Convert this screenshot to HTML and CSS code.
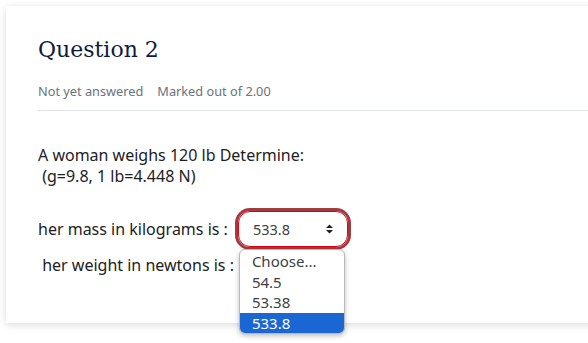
FILE: index.html
```html
<!DOCTYPE html>
<html>

<head>
  <meta charset="UTF-8">
  <meta name="viewport" content="width=device-width, initial-scale=1">
  <title>Question 2</title>

  <link rel="stylesheet" href="styles.css">
</head>

<body>

  <div class="que">
    <h3 class="que-title">Question 2</h3>
    <div class="que-info">
      <span>Not yet answered</span>
      <span>Marked out of 2.00</span>
    </div>
    <div class="que-text">
      <p>A woman weighs 120 lb Determine:<br>&nbsp;(g=9.8, 1 lb=4.448 N)</p>
    </div>

    <div class="answer-row">
      <span class="answer-label">her mass in kilograms is :</span>
      <div class="select-wrap">
        <div class="select is-invalid">
          <span class="select-value">533.8</span>
          <svg class="select-arrow" width="9" height="12" viewBox="0 0 9 12">
            <path d="M4.5 1.5 L8 5 H1 Z M4.5 10.5 L8 7 H1 Z" fill="#1d2125"/>
          </svg>
        </div>
        <ul class="select-popup">
          <li>Choose...</li>
          <li>54.5</li>
          <li>53.38</li>
          <li class="selected">533.8</li>
        </ul>
      </div>
    </div>

    <div class="answer-row second">
      <span class="answer-label">&nbsp;her weight in newtons is :</span>
      <div class="select hidden-under"></div>
    </div>
  </div>

</body>

</html>
```

FILE: styles.css
```css
html,
body {
  height: 100%;
  overflow: hidden;
}

body {
  margin: 0;
  background: #fff;
  font-family: "Noto Sans", "Open Sans", sans-serif;
  color: #1d2125;
}

.que {
  margin: 6px 0 0 6px;
  width: 600px;
  height: 317px;
  padding: 30px 0 0 32px;
  box-sizing: border-box;
  background: #fff;
  box-shadow: 0 2px 8px rgba(0, 0, 0, 0.14);
}

.que-title {
  margin: 0;
  font-family: "DejaVu Serif", "Liberation Serif", serif;
  font-weight: normal;
  font-size: 22px;
  line-height: 28px;
  color: #0f1b3d;
}

.que-info {
  display: flex;
  gap: 14px;
  margin-top: 18px;
  padding-bottom: 10px;
  border-bottom: 1px solid #dee2e6;
  font-size: 12.75px;
  color: #6a737b;
}

.que-text p {
  margin: 34px 0 0;
  font-size: 16px;
  line-height: 21px;
}

.answer-row {
  display: flex;
  align-items: center;
  gap: 10px;
  margin-top: 24px;
  font-size: 16px;
}

.answer-row.second {
  margin-top: 0;
}

.select-wrap {
  position: relative;
}

.select {
  display: flex;
  align-items: center;
  justify-content: space-between;
  width: 110px;
  height: 36px;
  padding: 0 13px 0 14px;
  box-sizing: border-box;
  border: 1px solid #ced4da;
  border-radius: 12px;
  font-size: 14.5px;
  color: #3a3f44;
}

.select.is-invalid {
  border-color: #e0000f;
  box-shadow: 0 0 0 3px #a33a3f;
}

.select.hidden-under {
  width: 100px;
}

.select-popup {
  position: absolute;
  left: 1px;
  top: 38px;
  width: 106px;
  margin: 0;
  padding: 1px 0 0;
  box-sizing: border-box;
  list-style: none;
  background: #fff;
  border: 1px solid #b8b8b8;
  border-radius: 6px;
  overflow: hidden;
  box-shadow: 0 2px 5px rgba(0, 0, 0, 0.25);
  font-size: 15px;
  color: #3c4146;
}

.select-popup li {
  height: 20.5px;
  line-height: 20px;
  padding-left: 12px;
}

.select-popup li.selected {
  background: #1a66d2;
  color: #fff;
}
```
